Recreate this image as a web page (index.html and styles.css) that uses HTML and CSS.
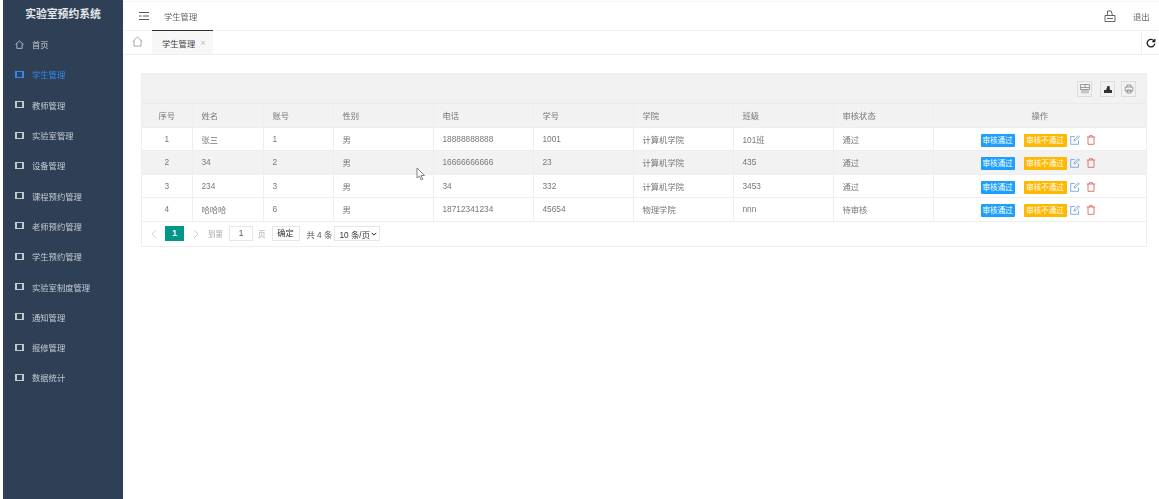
FILE: index.html
```html
<!DOCTYPE html>
<html lang="zh">
<head>
<meta charset="utf-8">
<title>实验室预约系统</title>
<link rel="stylesheet" href="styles.css">
</head>
<body>
<div class="app">
  <aside class="side">
    <div class="logo">实验室预约系统</div>
    <nav class="menu">
      <a class="item"><svg class="ic" viewBox="0 0 10 10"><path d="M.6 5 5 .9 9.400 5M2 3.900V9.300h6V3.900"/></svg>首页</a>
      <a class="item on"><span class="sq"></span>学生管理</a>
      <a class="item"><span class="sq"></span>教师管理</a>
      <a class="item"><span class="sq"></span>实验室管理</a>
      <a class="item"><span class="sq"></span>设备管理</a>
      <a class="item"><span class="sq"></span>课程预约管理</a>
      <a class="item"><span class="sq"></span>老师预约管理</a>
      <a class="item"><span class="sq"></span>学生预约管理</a>
      <a class="item"><span class="sq"></span>实验室制度管理</a>
      <a class="item"><span class="sq"></span>通知管理</a>
      <a class="item"><span class="sq"></span>报修管理</a>
      <a class="item"><span class="sq"></span>数据统计</a>
    </nav>
  </aside>
  <main class="main">
    <header class="top">
      <svg class="fold" viewBox="0 0 10 8"><path d="M0 .5h10M4 4h6M0 7.500h10M0 4h2.500"/></svg>
      <span class="crumb">学生管理</span>
      <span class="grow"></span>
      <svg class="bag" viewBox="0 0 12 12"><path d="M1 5.500h10v6H1zM3.500 5.500V1h3.700l1.300 4.500M3 8.500h6"/></svg>
      <span class="quit">退出</span>
    </header>
    <div class="tabs">
      <svg class="home" viewBox="0 0 12 12"><path d="M.8 6 6 1l5.200 5M2.200 5v6h7.600V5"/></svg>
      <div class="tab">学生管理<span class="x">×</span></div>
      <span class="grow"></span>
      <div class="refresh"><svg viewBox="0 0 10 10"><path d="M8.300 3.200A3.800 3.800 0 1 0 8.800 5.500M8.800 1v2.600H6.200"/></svg></div>
    </div>
    <section class="card">
      <div class="tools">
        <span class="tool wide"><svg viewBox="0 0 10 10"><path d="M.5.500h9v3h-9zM.5 3.500v2h9v-2M2 5.500v4M4 5.500v4M6 5.500v4M8 5.500v4M5 .500v3"/></svg></span>
        <span class="tool"><svg viewBox="0 0 10 10"><path class="solid" d="M1 6h8v3H1zM4.500 2h2l.5 4H3z"/></svg></span>
        <span class="tool round"><svg viewBox="0 0 10 10"><path d="M3 3V1h4v2M1.200 3h7.600v4H1.200zM3 6h4v3H3z"/></svg></span>
      </div>
      <table class="grid">
        <colgroup>
          <col class="c1"><col class="c2"><col class="c3"><col class="c4"><col class="c5"><col class="c6"><col class="c7"><col class="c8"><col class="c9"><col class="c10">
        </colgroup>
        <thead>
          <tr><th class="ctr">序号</th><th>姓名</th><th>账号</th><th>性别</th><th>电话</th><th>学号</th><th>学院</th><th>班级</th><th>审核状态</th><th class="ctr">操作</th></tr>
        </thead>
        <tbody>
          <tr><td class="ctr">1</td><td>张三</td><td>1</td><td>男</td><td>18888888888</td><td>1001</td><td>计算机学院</td><td>101班</td><td>通过</td>
            <td class="ops"><span class="btn blue">审核通过</span><span class="btn amber">审核不通过</span><svg class="edit" viewBox="0 0 10 10"><path d="M8.500 5.500V9.300H.7V1.500h4M4 6l.5-2L8.500.800l1 1L5.800 5.500z"/></svg><svg class="del" viewBox="0 0 10 10"><path d="M.8 2h8.400M3.500 2V.700h3V2M2 2v7.300h6V2"/></svg></td></tr>
          <tr class="hl"><td class="ctr">2</td><td>34</td><td>2</td><td>男</td><td>16666666666</td><td>23</td><td>计算机学院</td><td>435</td><td>通过</td>
            <td class="ops"><span class="btn blue">审核通过</span><span class="btn amber">审核不通过</span><svg class="edit" viewBox="0 0 10 10"><path d="M8.500 5.500V9.300H.7V1.500h4M4 6l.5-2L8.500.800l1 1L5.800 5.500z"/></svg><svg class="del" viewBox="0 0 10 10"><path d="M.8 2h8.400M3.500 2V.700h3V2M2 2v7.300h6V2"/></svg></td></tr>
          <tr><td class="ctr">3</td><td>234</td><td>3</td><td>男</td><td>34</td><td>332</td><td>计算机学院</td><td>3453</td><td>通过</td>
            <td class="ops"><span class="btn blue">审核通过</span><span class="btn amber">审核不通过</span><svg class="edit" viewBox="0 0 10 10"><path d="M8.500 5.500V9.300H.7V1.500h4M4 6l.5-2L8.500.800l1 1L5.800 5.500z"/></svg><svg class="del" viewBox="0 0 10 10"><path d="M.8 2h8.400M3.500 2V.700h3V2M2 2v7.300h6V2"/></svg></td></tr>
          <tr><td class="ctr">4</td><td>哈哈哈</td><td>6</td><td>男</td><td>18712341234</td><td>45654</td><td>物理学院</td><td>nnn</td><td>待审核</td>
            <td class="ops"><span class="btn blue">审核通过</span><span class="btn amber">审核不通过</span><svg class="edit" viewBox="0 0 10 10"><path d="M8.500 5.500V9.300H.7V1.500h4M4 6l.5-2L8.500.800l1 1L5.800 5.500z"/></svg><svg class="del" viewBox="0 0 10 10"><path d="M.8 2h8.400M3.500 2V.700h3V2M2 2v7.300h6V2"/></svg></td></tr>
        </tbody>
      </table>
      <div class="pager">
        <svg class="arrow first" viewBox="0 0 6 10"><path d="M5 1 1 5l4 4"/></svg>
        <span class="cur">1</span>
        <svg class="arrow" viewBox="0 0 6 10"><path d="M1 1l4 4-4 4"/></svg>
        <span class="mute to">到第</span>
        <span class="num">1</span>
        <span class="mute">页</span>
        <span class="ok">确定</span>
        <span class="total">共 4 条</span>
        <span class="size">10 条/页<svg viewBox="0 0 8 5"><path d="M1 1l3 3 3-3"/></svg></span>
      </div>
    </section>
  </main>
</div>
<svg class="cursor" viewBox="0 0 10 14"><path d="M1 1v10l2.500-2 1.800 4 1.500-.7L5 8.500h3.500z"/></svg>
</body>
</html>
```
FILE: styles.css
```css
* { box-sizing: border-box; }
html, body { margin: 0; height: 100%; background: #fff; overflow: hidden; }
body { font-family: "Liberation Sans", "Noto Sans CJK SC", sans-serif; font-size: 8.300px; color: #777; position: relative; }
.app { display: flex; height: 499px; padding-left: 3px; filter: blur(0.4px); }
.side { width: 120px; flex: none; background: #2f4056; color: #c5ccd4; }
.logo { height: 29px; line-height: 28px; text-align: center; font-size: 10.800px; font-weight: 700; color: #e6e8ea; }
.menu { display: flex; flex-direction: column; }
.item { height: 30.300px; display: flex; align-items: center; gap: 8px; padding-left: 12px; white-space: nowrap; }
.item.on { color: #2d8cf0; }
.ic { width: 9px; height: 9px; fill: none; stroke: #c5ccd4; stroke-width: .9; flex: none; }
.sq { width: 9px; height: 7px; border: solid #c3c9d1; border-width: 1px 2px; flex: none; }
.on .sq { border-color: #2d8cf0; }
.main { flex: 1; min-width: 0; display: flex; flex-direction: column; }
.grow { flex: 1; }
.top { height: 30px; margin-top: 1px; border-top: 1px solid #f4f4f4; border-bottom: 1px solid #f0f0f0; display: flex; align-items: center; padding-left: 16px; color: #666; flex: none; }
.fold { width: 10px; height: 8px; fill: none; stroke: #444; stroke-width: .9; }
.crumb { margin-left: 15px; }
.bag { width: 12px; height: 12px; fill: none; stroke: #555; stroke-width: .9; margin-right: 17px; }
.quit { margin-right: 9px; width: 17px; color: #666; }
.tabs { height: 24px; border-bottom: 1px solid #eee; display: flex; align-items: stretch; flex: none; }
.home { width: 11px; height: 11px; fill: none; stroke: #777; stroke-width: .7; margin: 5px 0 0 9px; }
.tab { width: 61px; margin-left: 9px; margin-top: -1px; background: #f7f7f7; border-top: 1px solid #333; color: #444; display: flex; align-items: center; padding-left: 10px; gap: 5px; }
.x { color: #bbb; font-size: 9px; }
.refresh { width: 18px; border-left: 1px solid #eee; display: flex; align-items: center; justify-content: center; }
.refresh svg { width: 10px; height: 10px; fill: none; stroke: #222; stroke-width: 1.300; }
.card { margin: 18px 12px 0 18px; width: 1006px; border: 1px solid #eee; flex: none; }
.tools { height: 30px; background: #f2f2f2; border-bottom: 1px solid #eaeaea; display: flex; align-items: center; justify-content: flex-end; gap: 6px; padding-right: 10px; }
.tool { width: 15px; height: 16px; border: 1px solid #ddd; display: flex; align-items: center; justify-content: center; }
.tool.wide { margin-right: 2px; }
.tool svg { width: 10px; height: 10px; fill: none; stroke: #777; stroke-width: .7; }
.tool .solid { fill: #333; stroke: none; }
.grid { width: 100%; border-collapse: collapse; table-layout: fixed; }
.c1 { width: 50px; } .c2 { width: 71px; } .c3 { width: 70px; } .c4 { width: 100px; } .c5 { width: 100px; }
.c6 { width: 100px; } .c7 { width: 100px; } .c8 { width: 100px; } .c9 { width: 100px; } .c10 { width: auto; }
th, td { height: 23.500px; padding: 0 9px; text-align: left; font-weight: 400; border: 1px solid #eee; white-space: nowrap; overflow: hidden; }
tr > :first-child { border-left: 0; }
tr > :last-child { border-right: 0; }
thead tr > * { border-top: 0; }
th { background: #f2f2f2; height: 23px; }
.hl td { background: #f2f2f2; }
.ctr { text-align: center; }
td.ops { padding: 6px 0 0 47px; vertical-align: top; line-height: 13px; }
.ops svg { display: inline-block; width: 10px; height: 10px; fill: none; stroke-width: .9; vertical-align: top; margin-top: 1px; }
.btn { display: inline-block; height: 13px; line-height: 13px; border-radius: 1px; color: #fff; font-size: 7.500px; text-align: center; vertical-align: top; }
.blue { width: 34px; background: #1e9fff; margin-right: 9px; }
.amber { width: 43px; background: #ffb800; margin-right: 3px; }
.edit { stroke: #7aa3dc; margin-right: 6px; }
.del { stroke: #e06666; }
.pager { height: 24px; display: flex; align-items: center; padding-left: 9px; color: #555; white-space: nowrap; }
.arrow { width: 6px; height: 10px; fill: none; stroke: #ccc; stroke-width: .9; flex: none; margin-left: 9px; }
.arrow.first { margin-left: 0; }
.cur { width: 19px; height: 15px; background: #009688; color: #fff; font-weight: 700; text-align: center; line-height: 15px; margin-left: 8px; }
.mute { color: #aaa; font-size: 7.500px; }
.to { margin-left: 9px; }
.num { width: 24px; height: 15px; border: 1px solid #e6e6e6; text-align: center; line-height: 13px; margin: 0 5px 0 6px; }
.ok { width: 28px; height: 15px; border: 1px solid #e6e6e6; text-align: center; line-height: 13px; margin-left: 6px; color: #333; }
.total { margin: 0 4px 0 7px; width: 23px; }
.size { width: 46px; height: 15px; border: 1px solid #e6e6e6; display: flex; align-items: center; justify-content: space-between; padding: 0 2px 0 5px; color: #333; }
.size svg { width: 6px; height: 4px; fill: none; stroke: #111; stroke-width: 1.200; flex: none; }
.cursor { position: absolute; left: 416px; top: 167px; width: 10px; height: 14px; fill: #fff; stroke: #666; stroke-width: .8; }
```
